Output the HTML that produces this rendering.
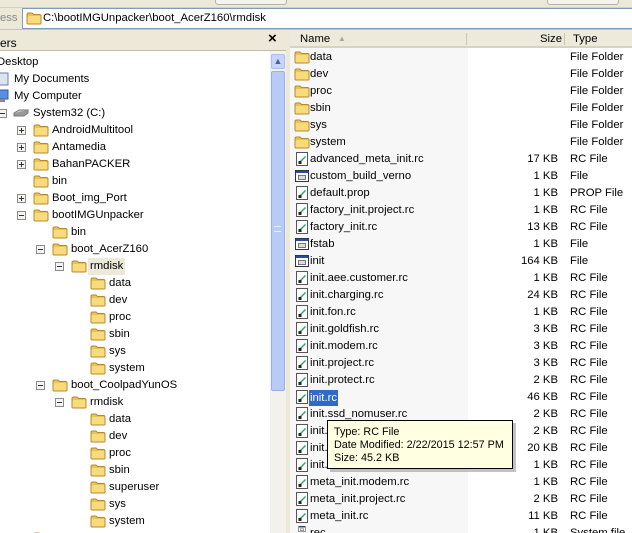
<!DOCTYPE html>
<html style="width:632px;height:533px;overflow:hidden"><head><meta charset="utf-8"><style>
*{margin:0;padding:0;box-sizing:border-box}
body{width:632px;height:533px;overflow:hidden;background:#ece9d8;font-family:"Liberation Sans",Tahoma,sans-serif;font-size:11.3px;color:#000;position:relative}
.a{position:absolute;white-space:nowrap}
.r{position:absolute;height:17px;line-height:17px;white-space:nowrap}
svg.i{position:absolute;width:16px;height:16px}
</style></head><body>
<svg width="0" height="0" style="position:absolute">
<defs>
<symbol id="f" viewBox="0 0 16 16"><path d="M1 4.5 Q1 3 2.5 3 H6 L7.5 4.5 H13.5 Q15 4.5 15 6 V13 Q15 14 14 14 H2 Q1 14 1 13 Z" fill="#e8c35a" stroke="#b8892a" stroke-width="1"/><path d="M1.5 7 Q2 6 3.5 6 H14.5 V13 Q14.5 13.5 14 13.5 H2 Q1.5 13.5 1.5 13 Z" fill="#f8dc7c"/></symbol>
<symbol id="rc" viewBox="0 0 16 16"><rect x="2.5" y="1.5" width="11" height="13" fill="#fff" stroke="#555"/><path d="M5 11 L11 5 L12 6 L6 12 Z" fill="#2a6"/><rect x="4.5" y="10" width="3" height="3" fill="#222"/></symbol>
<symbol id="ex" viewBox="0 0 16 16"><rect x="1.5" y="2.5" width="13" height="11" fill="#fff" stroke="#334"/><rect x="2" y="3" width="12" height="2" fill="#2a4aa8"/><rect x="4.5" y="7.5" width="7" height="4" fill="#ddd" stroke="#777"/></symbol>
<symbol id="pl" viewBox="0 0 9 9"><rect x=".5" y=".5" width="8" height="8" fill="#f4f4f0" stroke="#8a8a8a"/><path d="M2 4.5H7M4.5 2V7" stroke="#333"/></symbol>
<symbol id="mi" viewBox="0 0 9 9"><rect x=".5" y=".5" width="8" height="8" fill="#f4f4f0" stroke="#8a8a8a"/><path d="M2 4.5H7" stroke="#333"/></symbol>
</defs></svg>

<div class="a" style="left:0;top:0;width:632px;height:8px;background:#ece9d8;border-bottom:1px solid #d6d2c2"></div>
<div class="a" style="left:215px;top:-4px;width:72px;height:9px;border:1px solid #b8b4a4;border-radius:3px;background:#f4f3ee"></div>
<div class="a" style="left:547px;top:-4px;width:72px;height:9px;border:1px solid #b8b4a4;border-radius:3px;background:#f4f3ee"></div>
<div class="a" style="left:0;top:12px;color:#888">ess</div>
<div class="a" style="left:22px;top:8px;width:612px;height:21px;background:#fff;border:1px solid #7f9db9"></div>
<svg class="i" style="left:26px;top:10px"><use href="#f"/></svg>
<div class="a" style="left:43px;top:12px">C:\bootIMGUnpacker\boot_AcerZ160\rmdisk</div>
<div class="a" style="left:0;top:29px;width:632px;height:1px;background:#c8c4b4"></div>
<div class="a" style="left:0;top:30px;width:287px;height:21px;background:#ece9d8;border-bottom:1px solid #c0bcac"></div>
<div class="a" style="left:0;top:36px;font-size:12px">ers</div>
<div class="a" style="left:268px;top:30px;font-size:15px;font-weight:bold">×</div>
<div class="a" style="left:0;top:51px;width:270px;height:482px;background:#fff"></div>
<div class="a" style="left:270px;top:51px;width:16px;height:482px;background:#f2f1ea;border-left:1px solid #eee"></div>
<div class="a" style="left:271px;top:54px;width:14px;height:15px;background:#c4d6fc;border:1px solid #a8bef0;border-radius:2px;font-size:9px;text-align:center;line-height:12px;color:#4d6185">▲</div>
<div class="a" style="left:271px;top:71px;width:14px;height:320px;background:#b8cbf7;border:1px solid #98b0ea;border-radius:2px"></div>
<div class="a" style="left:274px;top:226px;width:7px;height:6px;border-top:1px solid #eef;border-bottom:1px solid #eef"></div>
<div class="a" style="left:286px;top:30px;width:4px;height:503px;background:#ece9d8"></div>

<div class="r" style="left:-3px;top:54px">Desktop</div>
<svg class="i" style="left:-6px;top:71px"><rect x="2" y="2" width="12" height="12" fill="#dde4f0" stroke="#6a7fa8"/></svg><div class="r" style="left:14px;top:71px">My Documents</div>
<svg class="i" style="left:-6px;top:88px"><rect x="2" y="2" width="12" height="9" fill="#5a8ee0" stroke="#3a5a9a"/><rect x="5" y="11" width="6" height="3" fill="#888"/></svg><div class="r" style="left:14px;top:88px">My Computer</div>
<svg style="position:absolute;left:-2px;top:109px;width:9px;height:9px"><use href="#mi"/></svg>
<svg class="i" style="left:13px;top:105px"><path d="M1 8 L6 5 H15 L11 9 H1Z" fill="#ccc" stroke="#777"/><path d="M1 8V11H11L15 8V5" fill="#999" stroke="#777"/></svg><div class="r" style="left:33px;top:105px">System32 (C:)</div>

<svg style="position:absolute;left:17px;top:126px;width:9px;height:9px"><use href="#pl"/></svg><svg class="i" style="left:33px;top:122px"><use href="#f"/></svg><div class="r" style="left:52px;top:122px">AndroidMultitool</div>
<svg style="position:absolute;left:17px;top:143px;width:9px;height:9px"><use href="#pl"/></svg><svg class="i" style="left:33px;top:139px"><use href="#f"/></svg><div class="r" style="left:52px;top:139px">Antamedia</div>
<svg style="position:absolute;left:17px;top:160px;width:9px;height:9px"><use href="#pl"/></svg><svg class="i" style="left:33px;top:156px"><use href="#f"/></svg><div class="r" style="left:52px;top:156px">BahanPACKER</div>
<svg class="i" style="left:33px;top:173px"><use href="#f"/></svg><div class="r" style="left:52px;top:173px">bin</div>
<svg style="position:absolute;left:17px;top:194px;width:9px;height:9px"><use href="#pl"/></svg><svg class="i" style="left:33px;top:190px"><use href="#f"/></svg><div class="r" style="left:52px;top:190px">Boot_img_Port</div>
<svg style="position:absolute;left:17px;top:211px;width:9px;height:9px"><use href="#mi"/></svg><svg class="i" style="left:33px;top:207px"><use href="#f"/></svg><div class="r" style="left:52px;top:207px">bootIMGUnpacker</div>
<svg class="i" style="left:52px;top:224px"><use href="#f"/></svg><div class="r" style="left:71px;top:224px">bin</div>
<svg style="position:absolute;left:36px;top:245px;width:9px;height:9px"><use href="#mi"/></svg><svg class="i" style="left:52px;top:241px"><use href="#f"/></svg><div class="r" style="left:71px;top:241px">boot_AcerZ160</div>
<svg style="position:absolute;left:55px;top:262px;width:9px;height:9px"><use href="#mi"/></svg><svg class="i" style="left:71px;top:258px"><use href="#f"/></svg><div class="r" style="left:88px;top:258px;padding:0 2px;background:#ece9d8">rmdisk</div>
<svg class="i" style="left:90px;top:275px"><use href="#f"/></svg><div class="r" style="left:109px;top:275px">data</div>
<svg class="i" style="left:90px;top:292px"><use href="#f"/></svg><div class="r" style="left:109px;top:292px">dev</div>
<svg class="i" style="left:90px;top:309px"><use href="#f"/></svg><div class="r" style="left:109px;top:309px">proc</div>
<svg class="i" style="left:90px;top:326px"><use href="#f"/></svg><div class="r" style="left:109px;top:326px">sbin</div>
<svg class="i" style="left:90px;top:343px"><use href="#f"/></svg><div class="r" style="left:109px;top:343px">sys</div>
<svg class="i" style="left:90px;top:360px"><use href="#f"/></svg><div class="r" style="left:109px;top:360px">system</div>
<svg style="position:absolute;left:36px;top:381px;width:9px;height:9px"><use href="#mi"/></svg><svg class="i" style="left:52px;top:377px"><use href="#f"/></svg><div class="r" style="left:71px;top:377px">boot_CoolpadYunOS</div>
<svg style="position:absolute;left:55px;top:398px;width:9px;height:9px"><use href="#mi"/></svg><svg class="i" style="left:71px;top:394px"><use href="#f"/></svg><div class="r" style="left:90px;top:394px">rmdisk</div>
<svg class="i" style="left:90px;top:411px"><use href="#f"/></svg><div class="r" style="left:109px;top:411px">data</div>
<svg class="i" style="left:90px;top:428px"><use href="#f"/></svg><div class="r" style="left:109px;top:428px">dev</div>
<svg class="i" style="left:90px;top:445px"><use href="#f"/></svg><div class="r" style="left:109px;top:445px">proc</div>
<svg class="i" style="left:90px;top:462px"><use href="#f"/></svg><div class="r" style="left:109px;top:462px">sbin</div>
<svg class="i" style="left:90px;top:479px"><use href="#f"/></svg><div class="r" style="left:109px;top:479px">superuser</div>
<svg class="i" style="left:90px;top:496px"><use href="#f"/></svg><div class="r" style="left:109px;top:496px">sys</div>
<svg class="i" style="left:90px;top:513px"><use href="#f"/></svg><div class="r" style="left:109px;top:513px">system</div>
<svg class="i" style="left:33px;top:530px"><use href="#f"/></svg>

<div class="a" style="left:290px;top:30px;width:342px;height:503px;background:#fff"></div>
<div class="a" style="left:290px;top:48px;width:178px;height:485px;background:#f7f7f7"></div>
<div class="a" style="left:290px;top:30px;width:342px;height:18px;background:#ebeadb;border-bottom:2px solid #d6d3c2"></div>
<div class="a" style="left:466px;top:33px;width:1px;height:12px;background:#c8c5b5"></div>
<div class="a" style="left:564px;top:33px;width:1px;height:12px;background:#c8c5b5"></div>
<div class="a" style="left:300px;top:33px">Name</div>
<div class="a" style="left:338px;top:34px;font-size:8px;color:#aca899">▲</div>
<div class="a" style="left:540px;top:33px">Size</div>
<div class="a" style="left:573px;top:33px">Type</div>

<svg class="i" style="left:294px;top:49px"><use href="#f"/></svg><div class="r" style="left:310px;top:49px">data</div><div class="r" style="left:570px;top:49px">File Folder</div>
<svg class="i" style="left:294px;top:66px"><use href="#f"/></svg><div class="r" style="left:310px;top:66px">dev</div><div class="r" style="left:570px;top:66px">File Folder</div>
<svg class="i" style="left:294px;top:83px"><use href="#f"/></svg><div class="r" style="left:310px;top:83px">proc</div><div class="r" style="left:570px;top:83px">File Folder</div>
<svg class="i" style="left:294px;top:100px"><use href="#f"/></svg><div class="r" style="left:310px;top:100px">sbin</div><div class="r" style="left:570px;top:100px">File Folder</div>
<svg class="i" style="left:294px;top:117px"><use href="#f"/></svg><div class="r" style="left:310px;top:117px">sys</div><div class="r" style="left:570px;top:117px">File Folder</div>
<svg class="i" style="left:294px;top:134px"><use href="#f"/></svg><div class="r" style="left:310px;top:134px">system</div><div class="r" style="left:570px;top:134px">File Folder</div>
<svg class="i" style="left:294px;top:151px"><use href="#rc"/></svg><div class="r" style="left:310px;top:151px">advanced_meta_init.rc</div><div class="r" style="left:500px;top:151px;width:58px;text-align:right">17 KB</div><div class="r" style="left:570px;top:151px">RC File</div>
<svg class="i" style="left:294px;top:168px"><use href="#ex"/></svg><div class="r" style="left:310px;top:168px">custom_build_verno</div><div class="r" style="left:500px;top:168px;width:58px;text-align:right">1 KB</div><div class="r" style="left:570px;top:168px">File</div>
<svg class="i" style="left:294px;top:185px"><use href="#rc"/></svg><div class="r" style="left:310px;top:185px">default.prop</div><div class="r" style="left:500px;top:185px;width:58px;text-align:right">1 KB</div><div class="r" style="left:570px;top:185px">PROP File</div>
<svg class="i" style="left:294px;top:202px"><use href="#rc"/></svg><div class="r" style="left:310px;top:202px">factory_init.project.rc</div><div class="r" style="left:500px;top:202px;width:58px;text-align:right">1 KB</div><div class="r" style="left:570px;top:202px">RC File</div>
<svg class="i" style="left:294px;top:219px"><use href="#rc"/></svg><div class="r" style="left:310px;top:219px">factory_init.rc</div><div class="r" style="left:500px;top:219px;width:58px;text-align:right">13 KB</div><div class="r" style="left:570px;top:219px">RC File</div>
<svg class="i" style="left:294px;top:236px"><use href="#ex"/></svg><div class="r" style="left:310px;top:236px">fstab</div><div class="r" style="left:500px;top:236px;width:58px;text-align:right">1 KB</div><div class="r" style="left:570px;top:236px">File</div>
<svg class="i" style="left:294px;top:253px"><use href="#ex"/></svg><div class="r" style="left:310px;top:253px">init</div><div class="r" style="left:500px;top:253px;width:58px;text-align:right">164 KB</div><div class="r" style="left:570px;top:253px">File</div>
<svg class="i" style="left:294px;top:270px"><use href="#rc"/></svg><div class="r" style="left:310px;top:270px">init.aee.customer.rc</div><div class="r" style="left:500px;top:270px;width:58px;text-align:right">1 KB</div><div class="r" style="left:570px;top:270px">RC File</div>
<svg class="i" style="left:294px;top:287px"><use href="#rc"/></svg><div class="r" style="left:310px;top:287px">init.charging.rc</div><div class="r" style="left:500px;top:287px;width:58px;text-align:right">24 KB</div><div class="r" style="left:570px;top:287px">RC File</div>
<svg class="i" style="left:294px;top:304px"><use href="#rc"/></svg><div class="r" style="left:310px;top:304px">init.fon.rc</div><div class="r" style="left:500px;top:304px;width:58px;text-align:right">1 KB</div><div class="r" style="left:570px;top:304px">RC File</div>
<svg class="i" style="left:294px;top:321px"><use href="#rc"/></svg><div class="r" style="left:310px;top:321px">init.goldfish.rc</div><div class="r" style="left:500px;top:321px;width:58px;text-align:right">3 KB</div><div class="r" style="left:570px;top:321px">RC File</div>
<svg class="i" style="left:294px;top:338px"><use href="#rc"/></svg><div class="r" style="left:310px;top:338px">init.modem.rc</div><div class="r" style="left:500px;top:338px;width:58px;text-align:right">3 KB</div><div class="r" style="left:570px;top:338px">RC File</div>
<svg class="i" style="left:294px;top:355px"><use href="#rc"/></svg><div class="r" style="left:310px;top:355px">init.project.rc</div><div class="r" style="left:500px;top:355px;width:58px;text-align:right">3 KB</div><div class="r" style="left:570px;top:355px">RC File</div>
<svg class="i" style="left:294px;top:372px"><use href="#rc"/></svg><div class="r" style="left:310px;top:372px">init.protect.rc</div><div class="r" style="left:500px;top:372px;width:58px;text-align:right">2 KB</div><div class="r" style="left:570px;top:372px">RC File</div>
<svg class="i" style="left:294px;top:389px"><use href="#rc"/></svg><div class="r" style="left:309px;top:390px;height:16px;line-height:16px;padding:0 1px;background:#316ac5;color:#fff">init.rc</div><div class="r" style="left:500px;top:389px;width:58px;text-align:right">46 KB</div><div class="r" style="left:570px;top:389px">RC File</div>
<svg class="i" style="left:294px;top:406px"><use href="#rc"/></svg><div class="r" style="left:310px;top:406px">init.ssd_nomuser.rc</div><div class="r" style="left:500px;top:406px;width:58px;text-align:right">2 KB</div><div class="r" style="left:570px;top:406px">RC File</div>
<svg class="i" style="left:294px;top:423px"><use href="#rc"/></svg><div class="r" style="left:310px;top:423px">init.</div><div class="r" style="left:500px;top:423px;width:58px;text-align:right">2 KB</div><div class="r" style="left:570px;top:423px">RC File</div>
<svg class="i" style="left:294px;top:440px"><use href="#rc"/></svg><div class="r" style="left:310px;top:440px">init.</div><div class="r" style="left:500px;top:440px;width:58px;text-align:right">20 KB</div><div class="r" style="left:570px;top:440px">RC File</div>
<svg class="i" style="left:294px;top:457px"><use href="#rc"/></svg><div class="r" style="left:310px;top:457px">init.</div><div class="r" style="left:500px;top:457px;width:58px;text-align:right">1 KB</div><div class="r" style="left:570px;top:457px">RC File</div>
<svg class="i" style="left:294px;top:474px"><use href="#rc"/></svg><div class="r" style="left:310px;top:474px">meta_init.modem.rc</div><div class="r" style="left:500px;top:474px;width:58px;text-align:right">1 KB</div><div class="r" style="left:570px;top:474px">RC File</div>
<svg class="i" style="left:294px;top:491px"><use href="#rc"/></svg><div class="r" style="left:310px;top:491px">meta_init.project.rc</div><div class="r" style="left:500px;top:491px;width:58px;text-align:right">2 KB</div><div class="r" style="left:570px;top:491px">RC File</div>
<svg class="i" style="left:294px;top:508px"><use href="#rc"/></svg><div class="r" style="left:310px;top:508px">meta_init.rc</div><div class="r" style="left:500px;top:508px;width:58px;text-align:right">11 KB</div><div class="r" style="left:570px;top:508px">RC File</div>
<svg class="i" style="left:294px;top:525px;height:8px"><use href="#ex"/></svg><div class="r" style="left:310px;top:525px;height:8px;overflow:hidden">rec</div><div class="r" style="left:500px;top:525px;width:58px;height:8px;overflow:hidden;text-align:right">1 KB</div><div class="r" style="left:570px;top:525px;height:8px;overflow:hidden">System file</div>

<div class="a" style="left:330px;top:423px;width:186px;height:49px;background:#888;opacity:.5"></div>
<div class="a" style="left:327px;top:420px;width:186px;height:49px;background:#ffffe1;border:1px solid #000;padding:5px 0 0 6px;line-height:13px;font-size:10.8px">Type: RC File<br>Date Modified: 2/22/2015 12:57 PM<br>Size: 45.2 KB</div>
</body></html>
